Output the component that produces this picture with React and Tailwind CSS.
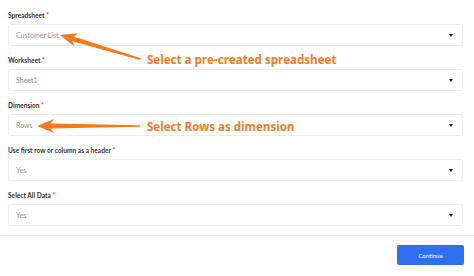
import { Fragment } from 'react';

const fields = [
  { label: 'Spreadsheet', value: 'Customer List' },
  { label: 'Worksheet', value: 'Sheet1' },
  { label: 'Dimension', value: 'Rows' },
  { label: 'Use first row or column as a header', value: 'Yes' },
  { label: 'Select All Data', value: 'Yes' },
];

function Arrow({ x, y, angle, length }) {
  const l = length;
  return (
    <polygon
      transform={`translate(${x} ${y}) rotate(${angle})`}
      points={`0,0 17,-7 13.5,-2.6 ${l},-0.8 ${l},0.8 13.5,2.6 17,7`}
      fill="#f47a1f"
    />
  );
}

export default function App() {
  return (
    <div className="relative w-[474px] h-[276px] bg-white overflow-hidden font-['Lato',sans-serif]">
      <div className="px-[8px] pt-[10px]">
        {fields.map((f) => (
          <div key={f.label} className="mb-[9px]">
            <div className="h-[10px] mb-[4px] text-[6.6px] leading-[10px] font-bold text-[#333]">
              {f.label} <span className="text-[#e0245e]">*</span>
            </div>
            <div className="h-[22px] w-[455px] border border-[#eeeeee] rounded-[2px] flex items-center justify-between pl-[7px] pr-[9px]">
              <span className="text-[7px] text-[#8f8f8f]">{f.value}</span>
              <span className="w-0 h-0 border-l-[2.5px] border-r-[2.5px] border-t-[3px] border-l-transparent border-r-transparent border-t-[#222]" />
            </div>
          </div>
        ))}
      </div>
      <div className="border-t border-[#eeeeee] mt-[1px]" />
      <div className="flex justify-end pr-[10px] pt-[9px]">
        <button className="w-[67px] h-[20px] bg-[#2f6ff0] rounded-[2px] text-white text-[6px] font-['Lato',sans-serif]">
          Continue
        </button>
      </div>

      <svg className="absolute inset-0 pointer-events-none" width="474" height="276">
        <Arrow x={60} y={35} angle={16.7} length={84} />
        <Arrow x={37} y={126} angle={0} length={103} />
      </svg>
      <span className="absolute left-[147px] top-[50px] origin-left scale-x-[0.89] whitespace-nowrap text-[13px] leading-[18px] font-bold text-[#f47a1f] font-['Open_Sans',sans-serif]">
        Select a pre-created spreadsheet
      </span>
      <span className="absolute left-[147px] top-[117px] origin-left scale-x-[0.89] whitespace-nowrap text-[13px] leading-[18px] font-bold text-[#f47a1f] font-['Open_Sans',sans-serif]">
        Select Rows as dimension
      </span>
    </div>
  );
}
